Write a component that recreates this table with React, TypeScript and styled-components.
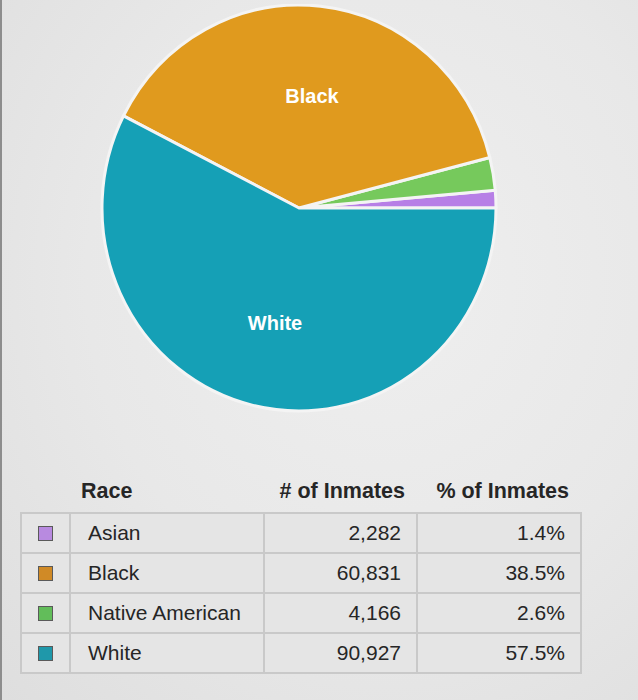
import * as React from 'react';
import styled, { createGlobalStyle } from 'styled-components';

interface Slice {
  name: string;
  count: string;
  percent: number;
  pie: string;
  swatch: string;
}

const slices: Slice[] = [
  { name: 'Asian', count: '2,282', percent: 1.4, pie: '#b77fe6', swatch: '#b88ae0' },
  { name: 'Black', count: '60,831', percent: 38.5, pie: '#e09a1e', swatch: '#d08a26' },
  { name: 'Native American', count: '4,166', percent: 2.6, pie: '#76c95c', swatch: '#62bd5a' },
  { name: 'White', count: '90,927', percent: 57.5, pie: '#15a0b6', swatch: '#1f98aa' },
];

// the chart draws them counter-clockwise from 3 o'clock in this order
const pieOrder = ['Asian', 'Native American', 'Black', 'White'];

const GlobalStyle = createGlobalStyle`
  body {
    margin: 0;
    background: #e6e6e6;
    font-family: "Liberation Sans", Arial, sans-serif;
  }
`;

const Page = styled.div`
  width: 636px;
  height: 700px;
  overflow: hidden;
  display: flex;
  flex-direction: column;
  border-left: 2px solid #8d8d8d;
  background: radial-gradient(ellipse at 60% 40%, #efefef 0%, #e8e8e8 55%, #dedede 100%);
`;

const ChartArea = styled.div`
  display: flex;
  padding: 4px 0 0 98px;
  height: 471px;
  box-sizing: border-box;
`;

const Label = styled.text`
  font-family: "Liberation Sans", Arial, sans-serif;
  font-weight: 700;
  font-size: 20px;
  fill: #ffffff;
`;

const Table = styled.table`
  width: 560px;
  margin-left: 18px;
  border-collapse: collapse;
  table-layout: fixed;
  color: #262626;
`;

const HeadCell = styled.th<{ $align: 'left' | 'right' }>`
  height: 41px;
  padding: 0 ${p => (p.$align === 'right' ? '12px' : '0')} 0 ${p => (p.$align === 'left' ? '11px' : '0')};
  text-align: ${p => p.$align};
  font-size: 21.5px;
  font-weight: 700;
  vertical-align: middle;
  white-space: nowrap;
`;

const Row = styled.tr`
  height: 40px;
`;

const Cell = styled.td<{ $align?: 'left' | 'right' }>`
  border: 2px solid #c9c9c9;
  background: #e5e5e5;
  font-size: 21px;
  text-align: ${p => p.$align || 'left'};
  padding: ${p => (p.$align === 'right' ? '0 15px 0 0' : '0 0 0 17px')};
  vertical-align: middle;
  white-space: nowrap;
`;

const SwatchCell = styled.td`
  border: 2px solid #c9c9c9;
  background: #e5e5e5;
  text-align: center;
  vertical-align: middle;
`;

const Swatch = styled.span<{ $color: string }>`
  display: inline-block;
  width: 13px;
  height: 13px;
  background: ${p => p.$color};
  border: 1.5px solid #5a5a5a;
  vertical-align: middle;
`;

const point = (deg: number): [number, number] => {
  const r = (deg * Math.PI) / 180;
  return [Math.cos(r), -Math.sin(r)];
};

const PieChart: React.FC = () => {
  const cx = 199;
  const cy = 204;
  const rx = 197;
  const ry = 203;
  let start = 0;
  const arcs = pieOrder.map(name => {
    const s = slices.find(x => x.name === name) as Slice;
    const end = start + (s.percent / 100) * 360;
    const [x1, y1] = point(start);
    const [x2, y2] = point(end);
    const large = end - start > 180 ? 1 : 0;
    const d = `M0 0 L${x1} ${y1} A1 1 0 ${large} 0 ${x2} ${y2} Z`;
    start = end;
    return { d, color: s.pie, name: s.name };
  });

  return (
    <svg width="400" height="414" viewBox="0 0 400 414">
      <g transform={`translate(${cx} ${cy}) scale(${rx} ${ry})`}>
        {arcs.map(a => (
          <path
            key={a.name}
            d={a.d}
            fill={a.color}
            stroke="#f4f4f4"
            strokeWidth={3}
            vectorEffect="non-scaling-stroke"
            strokeLinejoin="round"
          />
        ))}
      </g>
      <Label x="212" y="99" textAnchor="middle">Black</Label>
      <Label x="175" y="326" textAnchor="middle">White</Label>
    </svg>
  );
};

const App: React.FC = () => (
  <Page>
    <GlobalStyle />
    <ChartArea>
      <PieChart />
    </ChartArea>
    <Table>
      <colgroup>
        <col style={{ width: 49 }} />
        <col style={{ width: 194 }} />
        <col style={{ width: 153 }} />
        <col style={{ width: 164 }} />
      </colgroup>
      <thead>
        <tr>
          <HeadCell $align="left" />
          <HeadCell $align="left">Race</HeadCell>
          <HeadCell $align="right"># of Inmates</HeadCell>
          <HeadCell $align="right">% of Inmates</HeadCell>
        </tr>
      </thead>
      <tbody>
        {slices.map(s => (
          <Row key={s.name}>
            <SwatchCell>
              <Swatch $color={s.swatch} />
            </SwatchCell>
            <Cell>{s.name}</Cell>
            <Cell $align="right">{s.count}</Cell>
            <Cell $align="right">{s.percent.toFixed(1)}%</Cell>
          </Row>
        ))}
      </tbody>
    </Table>
  </Page>
);

export default App;
